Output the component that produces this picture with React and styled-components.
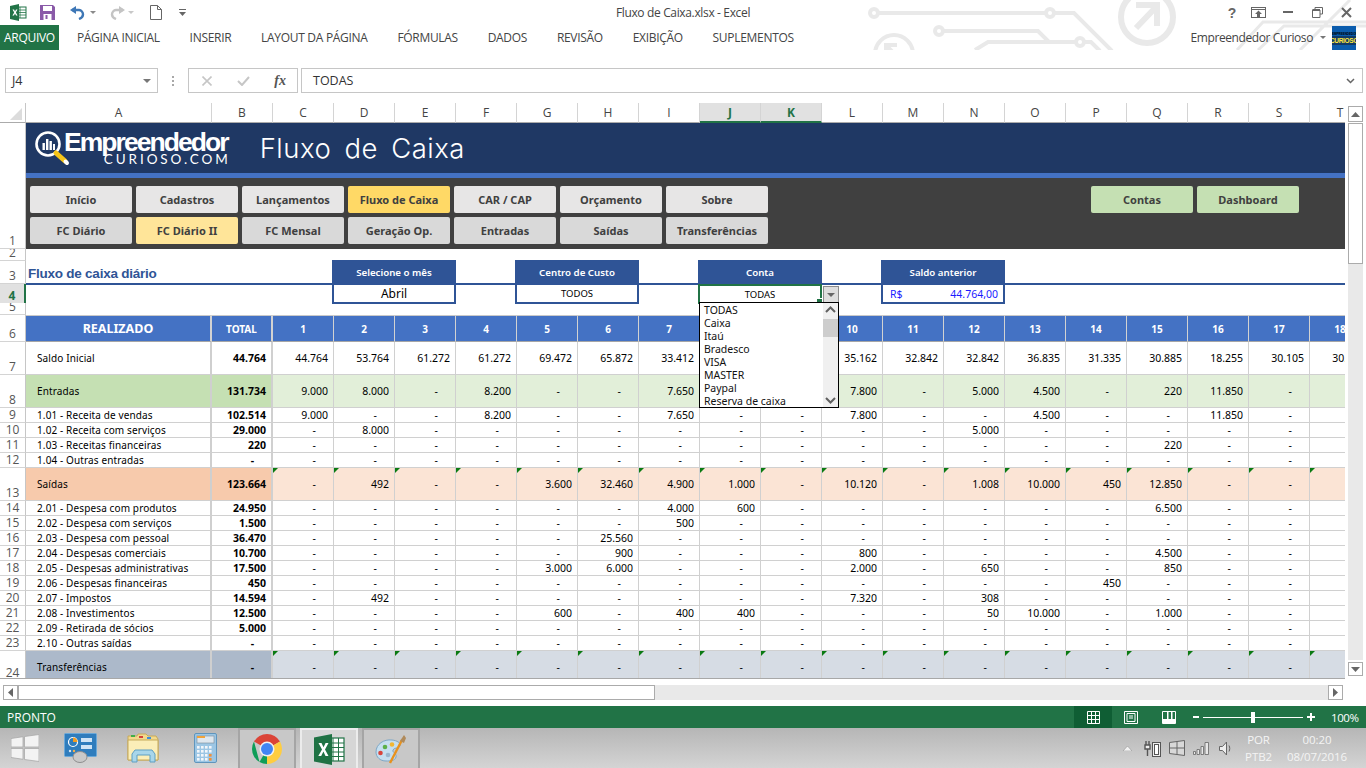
import React from 'react';
import styled, { createGlobalStyle } from 'styled-components';

// #region Data

const COLUMNS = ['A', 'B', 'C', 'D', 'E', 'F', 'G', 'H', 'I', 'J', 'K', 'L', 'M', 'N', 'O', 'P', 'Q', 'R', 'S', 'T'];
const DAYS = Array.from({ length: 18 }, (_, i) => i + 1);
const TABS = ['PÁGINA INICIAL', 'INSERIR', 'LAYOUT DA PÁGINA', 'FÓRMULAS', 'DADOS', 'REVISÃO', 'EXIBIÇÃO', 'SUPLEMENTOS'];
const ACCOUNTS = ['TODAS', 'Caixa', 'Itaú', 'Bradesco', 'VISA', 'MASTER', 'Paypal', 'Reserva de caixa'];
const NAV_TOP = [['Início'], ['Cadastros'], ['Lançamentos'], ['Fluxo de Caixa', 'active'], ['CAR / CAP'], ['Orçamento'], ['Sobre']];
const NAV_BOTTOM = [['FC Diário', 'dim'], ['FC Diário II', 'soft'], ['FC Mensal', 'dim'], ['Geração Op.', 'dim'], ['Entradas', 'dim'], ['Saídas', 'dim'], ['Transferências', 'dim']];

const ROWS = [
  { n: 7, h: 33, label: 'Saldo Inicial', total: '44.764', values: { 1: '44.764', 2: '53.764', 3: '61.272', 4: '61.272', 5: '69.472', 6: '65.872', 7: '33.412', 8: '36.162', 9: '35.162', 10: '35.162', 11: '32.842', 12: '32.842', 13: '36.835', 14: '31.335', 15: '30.885', 16: '18.255', 17: '30.105', 18: '30.105' } },
  { n: 8, h: 33, tone: 'green', label: 'Entradas', total: '131.734', values: { 1: '9.000', 2: '8.000', 4: '8.200', 7: '7.650', 10: '7.800', 12: '5.000', 13: '4.500', 15: '220', 16: '11.850' } },
  { n: 9, h: 15, label: '1.01 - Receita de vendas', total: '102.514', values: { 1: '9.000', 4: '8.200', 7: '7.650', 10: '7.800', 13: '4.500', 16: '11.850' } },
  { n: 10, h: 15, label: '1.02 - Receita com serviços', total: '29.000', values: { 2: '8.000', 12: '5.000' } },
  { n: 11, h: 15, label: '1.03 - Receitas financeiras', total: '220', values: { 15: '220' } },
  { n: 12, h: 15, label: '1.04 - Outras entradas', total: '-', values: {} },
  { n: 13, h: 33, tone: 'orange', flagged: true, label: 'Saídas', total: '123.664', values: { 2: '492', 5: '3.600', 6: '32.460', 7: '4.900', 8: '1.000', 10: '10.120', 12: '1.008', 13: '10.000', 14: '450', 15: '12.850' } },
  { n: 14, h: 15, label: '2.01 - Despesa com produtos', total: '24.950', values: { 7: '4.000', 8: '600', 15: '6.500' } },
  { n: 15, h: 15, label: '2.02 - Despesa com serviços', total: '1.500', values: { 7: '500' } },
  { n: 16, h: 15, label: '2.03 - Despesa com pessoal', total: '36.470', values: { 6: '25.560' } },
  { n: 17, h: 15, label: '2.04 - Despesas comerciais', total: '10.700', values: { 6: '900', 10: '800', 15: '4.500' } },
  { n: 18, h: 15, label: '2.05 - Despesas administrativas', total: '17.500', values: { 5: '3.000', 6: '6.000', 10: '2.000', 12: '650', 15: '850' } },
  { n: 19, h: 15, label: '2.06 - Despesas financeiras', total: '450', values: { 14: '450' } },
  { n: 20, h: 15, label: '2.07 - Impostos', total: '14.594', values: { 2: '492', 10: '7.320', 12: '308' } },
  { n: 21, h: 15, label: '2.08 - Investimentos', total: '12.500', values: { 5: '600', 7: '400', 8: '400', 12: '50', 13: '10.000', 15: '1.000' } },
  { n: 22, h: 15, label: '2.09 - Retirada de sócios', total: '5.000', values: {} },
  { n: 23, h: 15, label: '2.10 - Outras saídas', total: '-', values: {} },
  { n: 24, h: 33, pb: 3, tone: 'slate', flagged: true, label: 'Transferências', total: '-', values: {} },
];

const TONES = {
  green: ['#c5e0b3', '#e2efd9'],
  orange: ['#f7caac', '#fbe4d5'],
  slate: ['#acb9ca', '#d6dce4'],
};

// #endregion Data

// #region Styled Components

const GlobalStyle = createGlobalStyle`
  html, body {
    margin: 0;
    padding: 0;
    background: #fff;
    overflow: hidden;
  }
  * {
    box-sizing: border-box;
  }
`;

const Window = styled.div`
  width: 1366px;
  height: 768px;
  display: flex;
  flex-direction: column;
  overflow: hidden;
  background: #fff;
  font-family: "Noto Sans", "Open Sans", sans-serif;
`;

const Chrome = styled.div`
  position: relative;
  height: 50px;
  flex: none;
  overflow: hidden;
`;

const CircuitArt = styled.svg`
  position: absolute;
  left: 0;
  top: 0;
  width: 1366px;
  height: 50px;
  pointer-events: none;
`;

const TitleBar = styled.div`
  position: relative;
  height: 25px;
  display: grid;
  grid-template-columns: 1fr auto 1fr;
  align-items: center;
`;

const QuickAccess = styled.div`
  display: flex;
  align-items: center;
  padding-left: 10px;
  height: 25px;
`;

const QuickItem = styled.span`
  display: flex;
  margin-left: ${(p) => p.$ml || 0}px;
`;

const DocTitle = styled.div`
  font-family: "Open Sans", sans-serif;
  font-size: 12px;
  color: #444;
  letter-spacing: -0.35px;
`;

const WindowControls = styled.div`
  display: flex;
  justify-content: flex-end;
  align-items: center;
  padding-right: 5px;
  height: 25px;
`;

const ControlSlot = styled.span`
  display: flex;
  justify-content: center;
  width: ${(p) => p.$w}px;
`;

const HelpMark = styled.span`
  font-family: "Liberation Sans", sans-serif;
  font-weight: 700;
  font-size: 14px;
  line-height: 14px;
  color: #666;
`;

const Tabs = styled.div`
  position: relative;
  height: 25px;
  display: flex;
  align-items: center;
`;

const FileTab = styled.div`
  width: 59px;
  height: 25px;
  margin-right: 3px;
  background: #217346;
  color: #fff;
  font-family: "Open Sans", sans-serif;
  font-size: 12px;
  letter-spacing: -0.3px;
  display: flex;
  align-items: center;
  justify-content: center;
`;

const Tab = styled.div`
  padding: 0 14.9px;
  font-family: "Open Sans", sans-serif;
  font-size: 12px;
  letter-spacing: -0.3px;
  color: #444;
  white-space: nowrap;
`;

const UserBox = styled.div`
  margin-left: auto;
  display: flex;
  align-items: center;
  padding-right: 10px;
  font-family: "Open Sans", sans-serif;
  font-size: 12px;
  color: #444;
  letter-spacing: -0.4px;
`;

const UserCaret = styled.span`
  width: 0;
  height: 0;
  margin: 0 6px 0 7px;
  border-left: 3px solid transparent;
  border-right: 3px solid transparent;
  border-top: 3px solid #777;
`;

const Avatar = styled.div`
  width: 24px;
  height: 24px;
  padding-top: 2px;
  background: #0b5cad;
  display: flex;
  flex-direction: column;
  align-items: center;
  justify-content: center;
  font-family: "Liberation Sans", sans-serif;
  font-weight: 700;
  letter-spacing: 0;
  overflow: hidden;
  white-space: nowrap;
`;

const AvatarTop = styled.span`
  width: 24px;
  text-align: center;
  font-size: 3px;
  line-height: 4px;
  color: #000;
`;

const AvatarName = styled.span`
  font-size: 6.5px;
  line-height: 9px;
  letter-spacing: -0.3px;
  color: #ffe93b;
  background: #123a66;
`;

const FormulaRow = styled.div`
  margin-top: 18px;
  height: 25px;
  flex: none;
  display: flex;
  padding: 0 3px 0 5px;
  font-family: "Open Sans", sans-serif;
  font-size: 12.5px;
  color: #333;
`;

const NameBox = styled.div`
  width: 153px;
  display: flex;
  align-items: center;
  justify-content: space-between;
  padding: 0 6px;
  border: 1px solid #c6c6c6;
`;

const DownCaret = styled.span`
  width: 0;
  height: 0;
  border-left: 4px solid transparent;
  border-right: 4px solid transparent;
  border-top: 4px solid ${(p) => p.$color || '#777'};
`;

const Dots = styled.div`
  width: 30px;
  display: flex;
  flex-direction: column;
  align-items: center;
  justify-content: center;
  gap: 2px;
  span {
    width: 2px;
    height: 2px;
    background: #a8a8a8;
  }
`;

const FormulaButtons = styled.div`
  width: 110px;
  display: flex;
  align-items: center;
  justify-content: space-between;
  padding: 0 11px 0 13px;
  border: 1px solid #c6c6c6;
`;

const FxMark = styled.span`
  font-family: "Liberation Serif", serif;
  font-style: italic;
  font-weight: 700;
  font-size: 14px;
  color: #555;
`;

const FormulaInput = styled.div`
  flex: 1;
  margin-left: 3px;
  display: flex;
  align-items: center;
  justify-content: space-between;
  padding: 0 7px 0 11px;
  border: 1px solid #c6c6c6;
`;

const SheetArea = styled.div`
  margin-top: 10px;
  height: 576px;
  flex: none;
  display: flex;
`;

const Sheet = styled.div`
  position: relative;
  width: 1345px;
  height: 576px;
  overflow: hidden;
  border-bottom: 1px solid #a8a8a8;
`;

const Row = styled.div`
  display: grid;
  grid-template-columns: 26px 186px repeat(19, 61px);
  width: 1371px;
  height: ${(p) => p.$h}px;
  flex: none;
`;

const ColumnCorner = styled.div`
  position: relative;
  border-right: 1px solid #c6c6c6;
  border-bottom: 1px solid #ababab;
  &::after {
    content: '';
    position: absolute;
    right: 3px;
    bottom: 2px;
    border-left: 12px solid transparent;
    border-bottom: 12px solid #dcdcdc;
  }
`;

const ColumnHead = styled.div`
  display: flex;
  align-items: center;
  justify-content: center;
  font-family: "Open Sans", sans-serif;
  font-size: 12px;
  font-weight: ${(p) => (p.$selected ? 700 : 400)};
  color: ${(p) => (p.$selected ? '#217346' : '#444')};
  background: ${(p) => (p.$selected ? '#e1e1e1' : '#fff')};
  border-right: 1px solid #d4d4d4;
  border-bottom: ${(p) => (p.$selected ? '2px solid #217346' : '1px solid #ababab')};
`;

const RowHead = styled.div`
  grid-column: 1;
  grid-row: 1;
  display: flex;
  align-items: flex-end;
  justify-content: center;
  overflow: hidden;
  padding-bottom: ${(p) => p.$pb || 0}px;
  font-family: "Open Sans", sans-serif;
  font-size: 12px;
  line-height: 15px;
  font-weight: ${(p) => (p.$selected ? 700 : 400)};
  color: ${(p) => (p.$selected ? '#217346' : '#555')};
  background: ${(p) => (p.$selected ? '#e1e1e1' : '#fff')};
  border-right: ${(p) => (p.$selected ? '2px solid #217346' : '1px solid #c6c6c6')};
  border-bottom: 1px solid #d4d4d4;
`;

const Banner = styled.div`
  grid-column: 2 / -1;
  display: flex;
  flex-direction: column;
  width: 1319px;
`;

const BannerTop = styled.div`
  height: 50px;
  flex: none;
  display: flex;
  align-items: center;
  padding-left: 8px;
  background: #1f3864;
`;

const LogoBlock = styled.div`
  display: flex;
  align-items: center;
  color: #fff;
`;

const LogoWords = styled.div`
  display: flex;
  flex-direction: column;
  align-items: flex-end;
  margin-left: -6px;
`;

const LogoMain = styled.span`
  font-family: "Liberation Sans", sans-serif;
  font-weight: 700;
  font-size: 26.5px;
  line-height: 23px;
  letter-spacing: -1.95px;
`;

const LogoSub = styled.span`
  font-family: "Lato", sans-serif;
  font-size: 13.5px;
  line-height: 11px;
  letter-spacing: 2.9px;
  margin-right: -3px;
`;

const BannerTitle = styled.div`
  margin-left: 32px;
  font-family: "Inter", sans-serif;
  font-weight: 300;
  font-size: 27.5px;
  letter-spacing: 0.5px;
  word-spacing: 5px;
  color: #fff;
  white-space: nowrap;
`;

const BannerStripe = styled.div`
  height: 5px;
  flex: none;
  background: #4472c4;
`;

const BannerNav = styled.div`
  flex: 1;
  display: flex;
  flex-direction: column;
  gap: 4px;
  padding: 8px 4px 0;
  background: #404040;
`;

const NavRow = styled.div`
  display: flex;
  gap: 4px;
`;

const NavGroupEnd = styled.div`
  margin-left: 319px;
  display: flex;
  gap: 4px;
`;

const NAV_BG = { active: '#ffd966', soft: '#ffe599', dim: '#d9d9d9', green: '#c5e0b3' };

const NavButton = styled.div`
  width: 102px;
  height: 27px;
  display: flex;
  align-items: center;
  justify-content: center;
  border-radius: 2px;
  background: ${(p) => NAV_BG[p.$tone] || '#e7e6e6'};
  color: #404040;
  font-family: "Noto Sans", sans-serif;
  font-size: 11px;
  font-weight: 700;
`;

const SheetTitle = styled.div`
  grid-column: 2 / 5;
  grid-row: 1;
  display: flex;
  align-items: center;
  padding: 2px 0 0 2px;
  font-family: "Liberation Sans", sans-serif;
  font-size: 13.5px;
  font-weight: 700;
  letter-spacing: -0.24px;
  color: #2f5496;
`;

const FilterLine = styled.div`
  grid-column: 2 / -1;
  grid-row: 1;
  align-self: end;
  height: 2px;
  margin-bottom: -1px;
  background: #2f5496;
`;

const FilterHead = styled.div`
  grid-column: ${(p) => p.$col} / span 2;
  grid-row: 1;
  z-index: 1;
  margin: -1px 0 0 -2px;
  padding-top: 1px;
  display: flex;
  align-items: center;
  justify-content: center;
  background: #2f5496;
  color: #fff;
  font-family: "Noto Sans", sans-serif;
  font-size: 9.7px;
  font-weight: 600;
`;

const FilterValue = styled.div`
  grid-column: ${(p) => p.$col} / span 2;
  grid-row: 1;
  margin: 0 0 0 -2px;
  display: flex;
  align-items: center;
  justify-content: ${(p) => (p.$spread ? 'space-between' : 'center')};
  padding: 0 ${(p) => (p.$spread ? '5px 0 7px' : '0')};
  border: 2px solid #2f5496;
  border-top-width: 1px;
  color: ${(p) => (p.$blue ? '#1a1aff' : '#000')};
  font-family: "Noto Sans", sans-serif;
  font-size: ${(p) => p.$size || 9.5}px;
`;

const SelectedValue = styled(FilterValue)`
  position: relative;
  border: 2px solid #217346;
  border-top-width: 2px;
  &::after {
    content: '';
    position: absolute;
    right: -3px;
    bottom: -3px;
    width: 5px;
    height: 5px;
    background: #217346;
    border: 1px solid #fff;
  }
`;

const FilterArrow = styled.div`
  position: absolute;
  left: 823px;
  top: 183px;
  width: 16px;
  height: 17px;
  display: flex;
  align-items: center;
  justify-content: center;
  background: #dedede;
  border: 1px solid #8c8c8c;
`;

const Dropdown = styled.div`
  position: absolute;
  left: 699px;
  top: 199px;
  width: 140px;
  height: 106px;
  z-index: 3;
  display: flex;
  background: #fff;
  border: 1px solid #000;
`;

const DropList = styled.div`
  flex: 1;
  padding: 1px 0 0 4px;
  font-family: "Noto Sans", sans-serif;
  font-size: 10.5px;
  line-height: 13px;
  color: #111;
`;

const DropScroll = styled.div`
  width: 15px;
  display: flex;
  flex-direction: column;
  align-items: center;
  background: #f0f0f0;
  svg {
    flex: none;
  }
`;

const DropThumb = styled.div`
  width: 15px;
  height: 18px;
  margin-top: 3px;
  background: #cdcdcd;
`;

const Spacer = styled.div`
  flex: 1;
`;

const HeaderCell = styled.div`
  display: flex;
  align-items: center;
  justify-content: center;
  background: #4472c4;
  color: #fff;
  font-family: "Noto Sans", sans-serif;
  font-size: ${(p) => p.$size || 10}px;
  font-weight: 700;
  border-top: 1px solid #c9c9c9;
  border-bottom: 1px solid #a6a6a6;
  border-right: ${(p) => (p.$thick ? 2 : 1)}px solid #d2d2d2;
`;

const LabelCell = styled.div`
  display: flex;
  align-items: center;
  padding-left: 11px;
  overflow: hidden;
  white-space: nowrap;
  font-family: "Noto Sans", sans-serif;
  font-size: 10px;
  letter-spacing: 0.12px;
  color: #000;
  background: ${(p) => (p.$tone ? TONES[p.$tone][0] : '#fff')};
  border-right: 2px solid #cfcfcf;
  border-bottom: 1px solid #d0d0d0;
`;

const ValueCell = styled.div`
  position: relative;
  display: flex;
  align-items: center;
  justify-content: flex-end;
  white-space: nowrap;
  padding-right: ${(p) => (p.$dash ? 17 : 5)}px;
  font-family: "Noto Sans", sans-serif;
  font-size: 10.5px;
  font-weight: ${(p) => (p.$bold ? 700 : 400)};
  color: #000;
  background: ${(p) => (p.$bg ? p.$bg : '#fff')};
  border-right: ${(p) => (p.$thick ? 2 : 1)}px solid #d0d0d0;
  border-bottom: 1px solid #d0d0d0;
  &::before {
    content: '';
    display: ${(p) => (p.$flag ? 'block' : 'none')};
    position: absolute;
    left: 0;
    top: 0;
    border-top: 5px solid #0a7a12;
    border-right: 5px solid transparent;
  }
`;

const VScroll = styled.div`
  width: 21px;
  padding: 3px 3px 3px;
  display: flex;
  flex-direction: column;
`;

const ScrollButton = styled.div`
  width: 15px;
  height: ${(p) => p.$h || 15}px;
  flex: none;
  display: flex;
  align-items: center;
  justify-content: center;
  background: #fff;
  border: 1px solid #ababab;
`;

const VTrack = styled.div`
  flex: 1;
  display: flex;
  margin: 1px 0 2px;
  flex-direction: column;
  background: #e9e9e9;
`;

const VThumb = styled.div`
  height: 141px;
  background: #fff;
  border: 1px solid #ababab;
`;

const HScroll = styled.div`
  margin-top: 6px;
  height: 15px;
  flex: none;
  display: flex;
  padding-left: 3px;
  width: 1343px;
`;

const HThumb = styled.div`
  width: 637px;
  background: #fff;
  border: 1px solid #ababab;
`;

const HTrack = styled.div`
  flex: 1;
  background: #e9e9e9;
`;

const StatusBar = styled.div`
  margin-top: 6px;
  height: 22px;
  flex: none;
  display: flex;
  align-items: center;
  background: #217346;
  color: #fff;
  font-family: "Open Sans", sans-serif;
  font-size: 12px;
  padding-left: 7px;
`;

const ViewButtons = styled.div`
  margin-left: auto;
  height: 22px;
  display: flex;
`;

const ViewButton = styled.div`
  width: 38px;
  display: flex;
  align-items: center;
  justify-content: center;
  background: ${(p) => (p.$on ? '#0f5e34' : 'transparent')};
`;

const ZoomBox = styled.div`
  margin-left: 5px;
  display: flex;
  align-items: center;
  width: 122px;
`;

const ZoomMinus = styled.span`
  width: 6px;
  height: 2px;
  background: #fff;
`;

const ZoomLine = styled.div`
  position: relative;
  width: 100px;
  height: 1px;
  margin: 0 4px;
  background: #fff;
  &::after {
    content: '';
    position: absolute;
    left: 48px;
    top: -5px;
    width: 4px;
    height: 11px;
    background: #fff;
  }
`;

const ZoomPercent = styled.div`
  width: 51px;
  padding-left: 16px;
  font-size: 11.5px;
  letter-spacing: -0.4px;
`;

const Taskbar = styled.div`
  height: 40px;
  flex: none;
  display: flex;
  align-items: stretch;
  background: linear-gradient(#b6b6b6, #d4d4d4);
`;

const StartSlot = styled.div`
  width: 50px;
  display: flex;
  align-items: center;
  justify-content: center;
`;

const Pins = styled.div`
  display: flex;
  padding-right: 2px;
`;

const PinSlot = styled.div`
  width: 62px;
  display: flex;
  align-items: center;
  justify-content: center;
`;

const RunningApp = styled.div`
  width: 58px;
  margin-right: 4px;
  display: flex;
  align-items: center;
  justify-content: center;
  border: 2px solid ${(p) => (p.$on ? '#ececec' : '#a5a5a5')};
  border-bottom-width: 0;
  background: ${(p) => (p.$on ? '#d6d6d6' : '#c8c8c8')};
`;

const Tray = styled.div`
  margin-left: auto;
  display: flex;
  align-items: center;
  padding-right: 19px;
  color: #f4f4f4;
  font-family: "Open Sans", sans-serif;
  font-size: 11.5px;
  letter-spacing: -0.1px;
`;

const TraySlot = styled.span`
  display: flex;
  margin-left: ${(p) => p.$ml || 0}px;
`;

const TrayText = styled.div`
  text-align: center;
  line-height: 17px;
  margin-left: ${(p) => p.$ml || 0}px;
`;

// #endregion Styled Components

// #region Icons

const ExcelSmall = () => (
  <svg width="17" height="17" viewBox="0 0 17 17">
    <rect x="7" y="3" width="9" height="11" fill="#fff" stroke="#217346" />
    <path d="M10 3v11M7 6h9M7 8.500h9M7 11h9" stroke="#217346" strokeWidth="0.8" />
    <path d="M0 2l9-2v17l-9-2z" fill="#217346" />
    <path d="M2.500 5.500h1.600l.9 2 1-2h1.500L5.900 8.500l1.700 3H6l-1-2.100-1 2.100H2.400l1.800-3z" fill="#fff" />
  </svg>
);

const SaveIcon = () => (
  <svg width="15" height="15" viewBox="0 0 15 15">
    <path d="M0 0h13l2 2v13H0z" fill="#8a5aa8" />
    <rect x="3" y="1" width="9" height="5" fill="#fff" />
    <rect x="3.500" y="9" width="8" height="6" fill="#fff" />
    <rect x="5.500" y="10" width="2" height="4" fill="#8a5aa8" />
  </svg>
);

const UndoIcon = ({ color = '#3e77b6' }) => (
  <svg width="16" height="14" viewBox="0 0 16 14">
    <path d="M2 4h7a4.500 4.500 0 0 1 4 4.500c0 2-1.500 3.500-4 4.500" fill="none" stroke={color} strokeWidth="2.400" />
    <path d="M6 0v8L0 4z" fill={color} />
  </svg>
);

const RedoIcon = () => (
  <svg width="16" height="14" viewBox="0 0 16 14">
    <path d="M14 4H7a4.500 4.500 0 0 0-4 4.500c0 2 1.500 3.500 4 4.500" fill="none" stroke="#c4c4c4" strokeWidth="2.400" />
    <path d="M10 0v8l6-4z" fill="#c4c4c4" />
  </svg>
);

const NewDocIcon = () => (
  <svg width="12" height="15" viewBox="0 0 12 15">
    <path d="M.5.500h7l4 4v10H.500zM7.500.500v4h4" fill="#fff" stroke="#666" />
  </svg>
);

const CustomizeIcon = () => (
  <svg width="7" height="7" viewBox="0 0 7 7">
    <path d="M0 0h7v1H0zM0 3h7L3.500 7z" fill="#666" />
  </svg>
);

const TinyCaret = ({ color = '#8a8a8a' }) => (
  <svg width="6" height="3" viewBox="0 0 6 3">
    <path d="M0 0h6L3 3z" fill={color} />
  </svg>
);

const RibbonIcon = () => (
  <svg width="15" height="11" viewBox="0 0 15 11">
    <rect x=".5" y=".5" width="14" height="10" fill="none" stroke="#666" />
    <path d="M1 2.500h13" stroke="#666" />
    <path d="M7.500 3.500L11 7H9v3H6V7H4z" fill="#666" />
  </svg>
);

const MinIcon = () => (
  <svg width="10" height="3" viewBox="0 0 10 3">
    <rect y="0" width="10" height="2" fill="#666" />
  </svg>
);

const RestoreIcon = () => (
  <svg width="11" height="11" viewBox="0 0 11 11">
    <path d="M3 2.500V.5h7.500V7H8M.5 3h7.500v7.500H.5z" fill="none" stroke="#666" />
    <path d="M.5 3h7.500" stroke="#666" strokeWidth="2" />
  </svg>
);

const CloseIcon = () => (
  <svg width="11" height="11" viewBox="0 0 11 11">
    <path d="M1 1l9 9M10 1l-9 9" stroke="#666" strokeWidth="2" />
  </svg>
);

const CancelMark = () => (
  <svg width="10" height="10" viewBox="0 0 10 10">
    <path d="M.5.500l9 9M9.500.500l-9 9" stroke="#c6c6c6" strokeWidth="1.600" />
  </svg>
);

const CheckMark = () => (
  <svg width="13" height="10" viewBox="0 0 13 10">
    <path d="M1 5l4 4 7-8" fill="none" stroke="#c6c6c6" strokeWidth="2" />
  </svg>
);

const ChevronDown = () => (
  <svg width="9" height="6" viewBox="0 0 9 6">
    <path d="M1 1l3.500 3.500L8 1" fill="none" stroke="#666" strokeWidth="1.500" />
  </svg>
);

const ScrollArrow = ({ dir }) => {
  const d = { up: 'M0 5L4.500 0 9 5z', down: 'M0 0h9L4.500 5z', left: 'M5 0v9L0 4.500z', right: 'M0 0v9l5-4.500z' }[dir];
  const horizontal = dir === 'left' || dir === 'right';
  return (
    <svg width={horizontal ? 5 : 9} height={horizontal ? 9 : 5} viewBox={horizontal ? '0 0 5 9' : '0 0 9 5'}>
      <path d={d} fill="#666" />
    </svg>
  );
};

const DropChevron = ({ up }) => (
  <svg width="15" height="13" viewBox="0 0 15 13">
    <path d={up ? 'M3 9l4.500-4.500L12 9' : 'M3 4l4.500 4.500L12 4'} fill="none" stroke="#606060" strokeWidth="2" />
  </svg>
);

const Circuit = () => (
  <CircuitArt viewBox="0 0 1366 50">
    <g fill="none" stroke="#e9e9e9" strokeWidth="4">
      <path d="M878 13h168M1054 13h20l38 38" />
      <circle cx="874" cy="13" r="4" />
      <circle cx="1050" cy="13" r="4" />
      <path d="M943 31h95l11 11h27M1085 42h6l9 9M975 50l13-8h60" />
      <circle cx="939" cy="31" r="4" />
      <circle cx="1080" cy="42" r="4" />
      <circle cx="894" cy="54" r="19" />
      <path d="M903 63l-17-18M886 56V45h11" />
      <circle cx="1147" cy="17" r="26" strokeWidth="6" />
      <path d="M1136 28l21-22M1136 5h21v21" strokeWidth="6" />
      <path d="M1237 50l26-28h103M1258 50l26-24h82M1300 50l50-50" strokeWidth="3" />
    </g>
  </CircuitArt>
);

const LogoIcon = () => (
  <svg width="36" height="36" viewBox="0 0 36 36">
    <circle cx="14" cy="14" r="11.500" fill="none" stroke="#fff" strokeWidth="2.600" />
    <path d="M8.500 13h2.400v7H8.500zM12 9h2.400v11H12zM15.500 11h2.400v9h-2.400zM19 14h2v6h-2z" fill="#fff" />
    <path d="M22 23l9 8" stroke="#f5c518" strokeWidth="5" strokeLinecap="round" />
    <path d="M31.500 31.500l1.500 1.500" stroke="#fff" strokeWidth="4" strokeLinecap="round" />
  </svg>
);

const WindowsLogo = () => (
  <svg width="28" height="28" viewBox="0 0 28 28">
    <path d="M0 4.500l12-1.800v10.300H0zM13.500 2.500L28 .5v12.500H13.500zM0 14.500h12v10.800L0 23.500zM13.500 14.500H28V27.500l-14.500-2z" fill="#f3f3f3" stroke="#a9a9a9" strokeWidth=".8" />
  </svg>
);

const ControlPanelIcon = () => (
  <svg width="34" height="30" viewBox="0 0 34 30">
    <rect x="0.500" y="0.500" width="32" height="23" rx="1" fill="#2f7dbd" stroke="#6aa8d8" />
    <circle cx="9" cy="9" r="4.500" fill="none" stroke="#fff" strokeWidth="1.200" />
    <path d="M9 4.500a4.500 4.500 0 0 1 4.500 4.500H9z" fill="#f39c1f" />
    <rect x="17" y="5" width="11" height="4" fill="#cfe4f5" />
    <rect x="17" y="12" width="11" height="4" fill="#cfe4f5" />
    <circle cx="6" cy="18" r="1.200" fill="#cfe4f5" />
    <circle cx="10" cy="18" r="1.200" fill="#f4b04a" />
    <ellipse cx="16" cy="24" rx="7" ry="5.500" fill="#c9c9c9" stroke="#8f8f8f" />
  </svg>
);

const FolderIcon = () => (
  <svg width="32" height="30" viewBox="0 0 32 30">
    <path d="M1 3h9l1-2h8l2 2h8l2 3v21H1z" fill="#f2d98c" stroke="#c6a95a" />
    <rect x="4" y="2" width="4" height="2" fill="#3fae49" />
    <rect x="12" y="3" width="4" height="2" fill="#d4433a" />
    <rect x="20" y="4" width="4" height="2" fill="#3f8fd8" />
    <path d="M1 7h30v20H1z" fill="#fbeeb8" stroke="#c6a95a" />
    <path d="M5 29v-8l3-4h17l3 4v8h-5v-7H10v7z" fill="#a8d6ea" stroke="#5f9fc2" />
  </svg>
);

const CalcIcon = () => (
  <svg width="23" height="30" viewBox="0 0 23 30">
    <rect x=".5" y=".5" width="22" height="29" rx="1.500" fill="#9cc6e4" stroke="#5f95bd" />
    <rect x="3" y="3" width="17" height="7" fill="#dfe7ee" stroke="#7a8a98" strokeWidth=".6" />
    <rect x="3" y="3" width="8" height="2" fill="#f0a33a" />
    {[13, 17, 21, 25].map((y) => [3, 7, 11, 15].map((x) => (
      <rect key={`${x}-${y}`} x={x} y={y} width="2.600" height="2.600" fill={x === 15 && y > 20 ? '#f0913a' : '#f2f6fa'} />
    )))}
  </svg>
);

const ChromeIcon = () => (
  <svg width="30" height="30" viewBox="0 0 30 30">
    <path d="M15 15L2.010 7.500A15 15 0 0 1 27.990 7.500z" fill="#db4437" />
    <path d="M15 15l-7.500 13L2.010 7.500A15 15 0 0 0 15 30z" fill="#0f9d58" />
    <path d="M15 15L27.990 7.500A15 15 0 0 1 15 30z" fill="#ffcd40" />
    <circle cx="15" cy="15" r="7.500" fill="#f1f1f1" />
    <circle cx="15" cy="15" r="6" fill="#4285f4" />
  </svg>
);

const ExcelBig = () => (
  <svg width="31" height="31" viewBox="0 0 31 31">
    <rect x="14" y="4" width="16" height="23" fill="#fff" stroke="#217346" strokeWidth="1.200" />
    <path d="M19 4v23M24.500 4v23M14 9h16M14 13.500h16M14 18h16M14 22.500h16" stroke="#217346" strokeWidth="1" />
    <path d="M0 3.500L18 0v31L0 27.500z" fill="#1f7244" />
    <path d="M4.500 9h3l2 4.300L11.600 9h2.900l-3.500 6.500 3.500 6.500h-3l-2.100-4.400L7.200 22H4.300L8 15.500z" fill="#fff" />
  </svg>
);

const PaintIcon = () => (
  <svg width="32" height="31" viewBox="0 0 32 31">
    <path d="M1 18c0-8 8-13 16-12 5 .5 9 3 8 6-1 3-6 1-7 4s4 3 3 7c-1 4-6 4-10 4-6 0-10-4-10-9z" fill="#c5dff0" stroke="#7ea6c4" />
    <circle cx="5.500" cy="19" r="2.300" fill="#d8453c" />
    <circle cx="10" cy="13" r="2.300" fill="#5cb04a" />
    <circle cx="17" cy="10.500" r="2.300" fill="#f2b632" />
    <circle cx="13" cy="21" r="2.300" fill="#9ab8cf" />
    <path d="M27 6L15 29" stroke="#e8921e" strokeWidth="2.400" />
    <path d="M25 7l4-6 2 3-2 5z" fill="#b08a5a" />
  </svg>
);

const PowerIcon = () => (
  <svg width="17" height="17" viewBox="0 0 17 17" fill="none" stroke="#555">
    <rect x="8.500" y="2.500" width="8" height="14" fill="#eee" />
    <rect x="10.500" y="4.500" width="4" height="10" fill="#fff" />
    <path d="M1 5v4h5V5zM2 5V1M5 5V1M3.500 9v7" strokeWidth="1.400" fill="#eee" />
  </svg>
);

const FlagIcon = () => (
  <svg width="16" height="16" viewBox="0 0 16 16">
    <path d="M.5 2.500l15-2v15l-15-2zM8 1.500v13M.5 8h15" fill="#d8d8d8" stroke="#666" />
  </svg>
);

const SignalIcon = () => (
  <svg width="16" height="13" viewBox="0 0 16 13">
    <path d="M.5 9.500h2v3h-2zM4 7.500h2.500v5H4zM8 4.500h2.500v8H8zM12 .5h3.500v12H12z" fill="#e8e8e8" stroke="#666" strokeWidth=".8" />
  </svg>
);

const SpeakerIcon = () => (
  <svg width="14" height="15" viewBox="0 0 14 15">
    <path d="M.5 5.500h3L7.500 1v13l-4-4.500h-3z" fill="#eee" stroke="#666" />
    <path d="M10 4.500c1 2 1 4 0 6" fill="none" stroke="#666" />
  </svg>
);

const TrayUp = () => (
  <svg width="9" height="5" viewBox="0 0 9 5">
    <path d="M0 5L4.500 0 9 5z" fill="#f2f2f2" stroke="#777" strokeWidth=".4" />
  </svg>
);

const NormalViewIcon = () => (
  <svg width="13" height="13" viewBox="0 0 13 13">
    <path d="M.5.500h12v12H.5zM4.500.5v12M8.500.5v12M.5 4.500h12M.5 8.500h12" fill="none" stroke="#fff" />
  </svg>
);

const PageViewIcon = () => (
  <svg width="14" height="13" viewBox="0 0 14 13">
    <path d="M.5.500h13v12H.5z" fill="none" stroke="#fff" />
    <path d="M3 2.500h8v8H3zM5 5h4M5 7h4" fill="none" stroke="#fff" />
  </svg>
);

const BreakViewIcon = () => (
  <svg width="14" height="13" viewBox="0 0 14 13">
    <path d="M.5.500h13v12H.5z" fill="none" stroke="#fff" />
    <path d="M1 8h12v4H1zM5 1h1.500v7H5zM9 1h1.500v7H9z" fill="#fff" />
  </svg>
);

const PlusIcon = () => (
  <svg width="8" height="8" viewBox="0 0 8 8">
    <path d="M0 3h8v2H0zM3 0h2v8H3z" fill="#fff" />
  </svg>
);

// #endregion Icons

// #region Sheet parts

const NavButtons = ({ items }) => items.map(([text, tone]) => (
  <NavButton key={text} $tone={tone}>{text}</NavButton>
));

const DataRow = ({ row }) => {
  const tone = row.tone ? TONES[row.tone] : null;
  return (
    <Row $h={row.h}>
      <RowHead $pb={row.pb}>{row.n}</RowHead>
      <LabelCell $tone={row.tone}>{row.label}</LabelCell>
      <ValueCell $bold $thick $bg={tone && tone[0]} $dash={row.total === '-'}>{row.total}</ValueCell>
      {DAYS.map((day) => {
        const value = row.values[day] || '-';
        return (
          <ValueCell key={day} $bg={tone && tone[1]} $dash={value === '-'} $flag={row.flagged}>{value}</ValueCell>
        );
      })}
    </Row>
  );
};

// #endregion Sheet parts

const App = () => (
  <Window>
    <GlobalStyle />

    <Chrome>
      <Circuit />
      <TitleBar>
        <QuickAccess>
          <QuickItem><ExcelSmall /></QuickItem>
          <QuickItem $ml={13}><SaveIcon /></QuickItem>
          <QuickItem $ml={15}><UndoIcon /></QuickItem>
          <QuickItem $ml={4}><TinyCaret /></QuickItem>
          <QuickItem $ml={13}><RedoIcon /></QuickItem>
          <QuickItem $ml={3}><TinyCaret color="#c8c8c8" /></QuickItem>
          <QuickItem $ml={16}><NewDocIcon /></QuickItem>
          <QuickItem $ml={17}><CustomizeIcon /></QuickItem>
        </QuickAccess>
        <DocTitle>Fluxo de Caixa.xlsx - Excel</DocTitle>
        <WindowControls>
          <ControlSlot $w={22}><HelpMark>?</HelpMark></ControlSlot>
          <ControlSlot $w={30}><RibbonIcon /></ControlSlot>
          <ControlSlot $w={30}><MinIcon /></ControlSlot>
          <ControlSlot $w={28}><RestoreIcon /></ControlSlot>
          <ControlSlot $w={30}><CloseIcon /></ControlSlot>
        </WindowControls>
      </TitleBar>
      <Tabs>
        <FileTab>ARQUIVO</FileTab>
        {TABS.map((tab) => <Tab key={tab}>{tab}</Tab>)}
        <UserBox>
          Empreendedor Curioso
          <UserCaret />
          <Avatar>
            <AvatarTop>EMPREENDEDOR</AvatarTop>
            <AvatarName>CURIOSO</AvatarName>
          </Avatar>
        </UserBox>
      </Tabs>
    </Chrome>

    <FormulaRow>
      <NameBox>J4<DownCaret /></NameBox>
      <Dots><span /><span /><span /></Dots>
      <FormulaButtons>
        <CancelMark />
        <CheckMark />
        <FxMark>fx</FxMark>
      </FormulaButtons>
      <FormulaInput>TODAS<ChevronDown /></FormulaInput>
    </FormulaRow>

    <SheetArea>
      <Sheet>
        <Row $h={20}>
          <ColumnCorner />
          {COLUMNS.map((col) => (
            <ColumnHead key={col} $selected={col === 'J' || col === 'K'}>{col}</ColumnHead>
          ))}
        </Row>

        <Row $h={126}>
          <RowHead>1</RowHead>
          <Banner>
            <BannerTop>
              <LogoBlock>
                <LogoIcon />
                <LogoWords>
                  <LogoMain>Empreendedor</LogoMain>
                  <LogoSub>CURIOSO.COM</LogoSub>
                </LogoWords>
              </LogoBlock>
              <BannerTitle>Fluxo de Caixa</BannerTitle>
            </BannerTop>
            <BannerStripe />
            <BannerNav>
              <NavRow>
                <NavButtons items={NAV_TOP} />
                <NavGroupEnd>
                  <NavButton $tone="green">Contas</NavButton>
                  <NavButton $tone="green">Dashboard</NavButton>
                </NavGroupEnd>
              </NavRow>
              <NavRow>
                <NavButtons items={NAV_BOTTOM} />
              </NavRow>
            </BannerNav>
          </Banner>
        </Row>

        <Row $h={12}><RowHead>2</RowHead></Row>

        <Row $h={23}>
          <RowHead>3</RowHead>
          <FilterLine />
          <SheetTitle>Fluxo de caixa diário</SheetTitle>
          <FilterHead $col={5}>Selecione o mês</FilterHead>
          <FilterHead $col={8}>Centro de Custo</FilterHead>
          <FilterHead $col={11}>Conta</FilterHead>
          <FilterHead $col={14}>Saldo anterior</FilterHead>
        </Row>

        <Row $h={19}>
          <RowHead $selected>4</RowHead>
          <FilterValue $col={5} $size={12}>Abril</FilterValue>
          <FilterValue $col={8}>TODOS</FilterValue>
          <SelectedValue $col={11}>TODAS</SelectedValue>
          <FilterValue $col={14} $spread $blue $size={10.5}>
            <span>R$</span>
            <span>44.764,00</span>
          </FilterValue>
        </Row>

        <Row $h={12}><RowHead>5</RowHead></Row>

        <Row $h={27}>
          <RowHead>6</RowHead>
          <HeaderCell $thick $size={12.5}>REALIZADO</HeaderCell>
          <HeaderCell $thick>TOTAL</HeaderCell>
          {DAYS.map((day) => <HeaderCell key={day}>{day}</HeaderCell>)}
        </Row>

        {ROWS.map((row) => <DataRow key={row.n} row={row} />)}

        <FilterArrow><DownCaret $color="#666" /></FilterArrow>

        <Dropdown>
          <DropList>
            {ACCOUNTS.map((account) => <div key={account}>{account}</div>)}
          </DropList>
          <DropScroll>
            <DropChevron up />
            <DropThumb />
            <Spacer />
            <DropChevron />
          </DropScroll>
        </Dropdown>
      </Sheet>

      <VScroll>
        <ScrollButton $h={16}><ScrollArrow dir="up" /></ScrollButton>
        <VTrack>
          <VThumb />
          <Spacer />
        </VTrack>
        <ScrollButton $h={14}><ScrollArrow dir="down" /></ScrollButton>
      </VScroll>
    </SheetArea>

    <HScroll>
      <ScrollButton><ScrollArrow dir="left" /></ScrollButton>
      <HThumb />
      <HTrack />
      <ScrollButton><ScrollArrow dir="right" /></ScrollButton>
    </HScroll>

    <StatusBar>
      PRONTO
      <ViewButtons>
        <ViewButton $on><NormalViewIcon /></ViewButton>
        <ViewButton><PageViewIcon /></ViewButton>
        <ViewButton><BreakViewIcon /></ViewButton>
      </ViewButtons>
      <ZoomBox>
        <ZoomMinus />
        <ZoomLine />
        <PlusIcon />
      </ZoomBox>
      <ZoomPercent>100%</ZoomPercent>
    </StatusBar>

    <Taskbar>
      <StartSlot><WindowsLogo /></StartSlot>
      <Pins>
        <PinSlot><ControlPanelIcon /></PinSlot>
        <PinSlot><FolderIcon /></PinSlot>
        <PinSlot><CalcIcon /></PinSlot>
      </Pins>
      <RunningApp><ChromeIcon /></RunningApp>
      <RunningApp $on><ExcelBig /></RunningApp>
      <RunningApp><PaintIcon /></RunningApp>
      <Tray>
        <TraySlot><TrayUp /></TraySlot>
        <TraySlot $ml={12}><PowerIcon /></TraySlot>
        <TraySlot $ml={8}><FlagIcon /></TraySlot>
        <TraySlot $ml={8}><SignalIcon /></TraySlot>
        <TraySlot $ml={10}><SpeakerIcon /></TraySlot>
        <TrayText $ml={12}>POR<br />PTB2</TrayText>
        <TrayText $ml={15}>00:20<br />08/07/2016</TrayText>
      </Tray>
    </Taskbar>
  </Window>
);

export default App;
